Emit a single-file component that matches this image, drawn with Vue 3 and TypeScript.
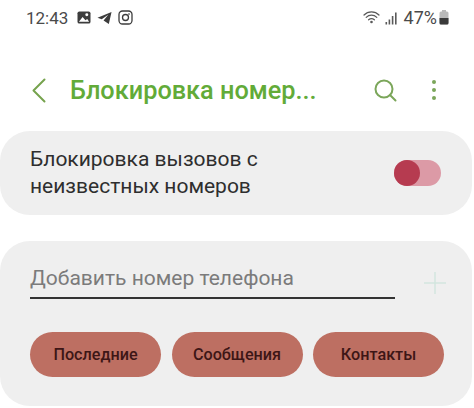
<template>
  <div class="screen">
    <div class="status-bar">
      <div class="status-left">
        <span class="time">12:43</span>
        <svg class="note-icon" width="14" height="13" viewBox="0 0 15 14">
          <rect x="0.5" y="0.5" width="14" height="13" rx="2" fill="#3c3c3c" />
          <circle cx="10.5" cy="4" r="1.6" fill="#fff" />
          <path d="M2 11.5 L6 6.5 L9 10 L11 8.5 L13 11.5 Z" fill="#fff" />
        </svg>
        <svg class="note-icon" width="15" height="14" viewBox="0 0 16 14">
          <path d="M15.5 0.5 L0.5 6.8 L5 8.4 L12 3.6 L7 9.6 L12.6 13.5 Z" fill="#3c3c3c" />
        </svg>
        <svg class="note-icon" width="15" height="15" viewBox="0 0 15 15" fill="none" stroke="#3c3c3c" stroke-width="1.3">
          <rect x="1" y="1" width="13" height="13" rx="3.5" />
          <circle cx="7.5" cy="7.5" r="3" />
          <circle cx="11" cy="4" r="0.5" fill="#3c3c3c" stroke-width="0.6" />
        </svg>
      </div>
      <div class="status-right">
        <svg width="18" height="15" viewBox="0 0 18 15" fill="none" stroke="#5a5a5a" stroke-width="1.2" stroke-linecap="round">
          <path d="M1 5 C5 0.8 12 0.8 16 5" />
          <path d="M3.2 7.4 C6.2 4.4 10.8 4.4 13.8 7.4" />
          <path d="M5.6 9.8 C7.4 8.2 9.6 8.2 11.4 9.8" />
          <circle cx="8.5" cy="12" r="0.7" fill="#5a5a5a" />
        </svg>
        <svg width="13" height="14" viewBox="0 0 13 14" fill="#5a5a5a">
          <rect x="0.5" y="11" width="1.6" height="2.5" />
          <rect x="3.6" y="8.5" width="1.6" height="5" />
          <rect x="6.8" y="5" width="1.6" height="8.5" />
          <rect x="10" y="1.5" width="1.6" height="12" />
        </svg>
        <span class="battery-text">47%</span>
        <svg width="10" height="15" viewBox="0 0 10 15">
          <rect x="3" y="0" width="4" height="2" fill="#b9b9b9" />
          <rect x="0.5" y="1.5" width="9" height="13" rx="1.5" fill="#b9b9b9" />
          <path d="M0.5 8 H9.5 V13 a1.5 1.5 0 0 1 -1.5 1.5 H2 a1.5 1.5 0 0 1 -1.5 -1.5 Z" fill="#3a3a3a" />
        </svg>
      </div>
    </div>

    <header class="app-bar">
      <svg class="back" width="14" height="25" viewBox="0 0 14 25" fill="none" stroke="#76a34e" stroke-width="2" stroke-linecap="round" stroke-linejoin="round">
        <path d="M12.5 1.5 L1.5 12.5 L12.5 23.5" />
      </svg>
      <h1 class="title">Блокировка номер...</h1>
      <svg class="search" width="23" height="23" viewBox="0 0 23 23" fill="none" stroke="#7ba65a" stroke-width="2" stroke-linecap="round">
        <circle cx="10" cy="10" r="8.5" />
        <path d="M16 16 L21.5 21.5" />
      </svg>
      <div class="dots">
        <span v-for="n in 3" :key="n" class="dot"></span>
      </div>
    </header>

    <section class="card card-block">
      <p class="block-label">Блокировка вызовов с<br />неизвестных номеров</p>
      <div class="toggle"><span class="knob"></span></div>
    </section>

    <section class="card card-add">
      <div class="add-row">
        <div class="add-input">Добавить номер телефона</div>
        <svg class="plus" width="24" height="24" viewBox="0 0 24 24" stroke="#d3e6df" stroke-width="1.5">
          <path d="M12 1 V23 M1 12 H23" />
        </svg>
      </div>
      <div class="pills">
        <button v-for="label in pills" :key="label" class="pill">{{ label }}</button>
      </div>
    </section>
  </div>
</template>

<script setup lang="ts">
const pills: string[] = ['Последние', 'Сообщения', 'Контакты']
</script>

<style>
html,
body {
  margin: 0;
  background: #fff;
}
</style>

<style scoped>
.screen {
  width: 474px;
  height: 408px;
  overflow: hidden;
  background: #fff;
  font-family: Roboto, "Noto Sans", sans-serif;
}

.status-bar {
  height: 35px;
  padding: 0 14px 0 26px;
  display: flex;
  justify-content: space-between;
  align-items: center;
  color: #4a4a4a;
}

.status-left,
.status-right {
  display: flex;
  align-items: center;
}

.time {
  font-size: 17px;
  margin-right: 9px;
}

.note-icon {
  margin-right: 6px;
}

.status-right {
  gap: 4px;
  margin-right: 11px;
}

.battery-text {
  font-size: 18px;
  margin-left: 2px;
  margin-right: -2px;
}

.app-bar {
  height: 56px;
  margin-top: 27px;
  padding-left: 32px;
  display: flex;
  align-items: center;
}

.title {
  margin: 0 0 0 24px;
  width: 304px;
  font-size: 25.3px;
  font-weight: 500;
  color: #62ab38;
  white-space: nowrap;
}

.search {
  flex-shrink: 0;
}

.dots {
  margin-left: 35px;
  display: flex;
  flex-direction: column;
  gap: 4px;
}

.dot {
  width: 4px;
  height: 4px;
  border-radius: 50%;
  background: #7ba65a;
}

.card {
  width: 472px;
  background: #efefef;
  border-radius: 30px;
}

.card-block {
  height: 84px;
  margin-top: 13px;
  padding: 0 31px 0 30px;
  box-sizing: border-box;
  display: flex;
  justify-content: space-between;
  align-items: center;
}

.block-label {
  margin: 0;
  font-size: 21px;
  line-height: 27px;
  color: #2e2e2e;
}

.toggle {
  width: 47px;
  height: 26px;
  border-radius: 13px;
  background: #dc9aa6;
}

.knob {
  display: block;
  width: 26px;
  height: 26px;
  border-radius: 50%;
  background: #b63b50;
}

.card-add {
  height: 165px;
  margin-top: 26px;
  padding: 20px 25px 0 30px;
  box-sizing: border-box;
}

.add-row {
  display: flex;
  align-items: center;
}

.add-input {
  width: 365px;
  height: 38px;
  box-sizing: border-box;
  border-bottom: 2px solid #333;
  font-size: 21px;
  line-height: 34px;
  color: #7b7b7b;
}

.plus {
  margin-left: 28px;
  margin-top: 6px;
}

.pills {
  margin-top: 33px;
  display: flex;
  gap: 10.5px;
}

.pill {
  width: 131px;
  height: 45px;
  border: none;
  border-radius: 23px;
  background: #bd6f62;
  color: #3d1616;
  font-family: inherit;
  font-size: 16.2px;
  font-weight: 500;
  padding: 0;
}
</style>
